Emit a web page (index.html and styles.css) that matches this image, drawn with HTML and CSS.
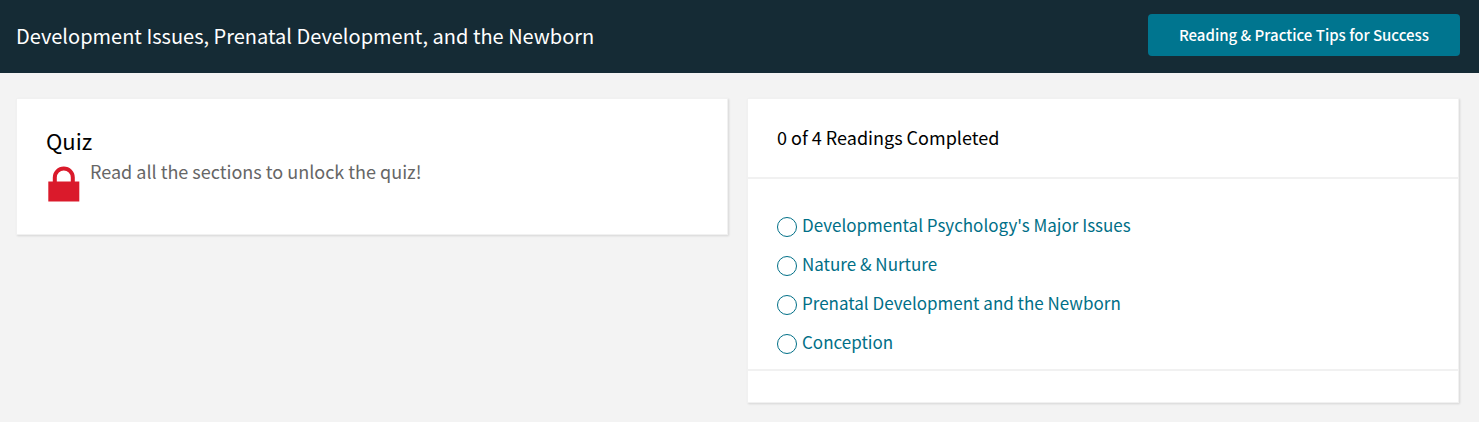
FILE: index.html
```html
<!DOCTYPE html>
<html lang="en">
<head>
<meta charset="utf-8">
<title>Development Issues, Prenatal Development, and the Newborn</title>
<link rel="stylesheet" href="styles.css">
</head>
<body>
<header class="topbar">
  <h1 class="topbar-title">Development Issues, Prenatal Development, and the Newborn</h1>
  <button class="tips-button" type="button">Reading &amp; Practice Tips for Success</button>
</header>
<main class="columns">
  <section class="card quiz">
    <h2 class="quiz-title">Quiz</h2>
    <div class="quiz-status">
      <svg class="lock" viewBox="0 0 34 36" aria-hidden="true"><path class="lock-body" d="M2.300 15.500h31v20h-31z"/><path class="lock-shackle" d="M8.800 16v-4.500a9 9 0 0 1 18 0V16"/></svg>
      <p class="quiz-text">Read all the sections to unlock the quiz!</p>
    </div>
  </section>
  <section class="card readings">
    <h2 class="readings-title">0 of 4 Readings Completed</h2>
    <ul class="reading-list">
      <li class="reading"><span class="circle"></span><a class="reading-link" href="#">Developmental Psychology's Major Issues</a></li>
      <li class="reading"><span class="circle"></span><a class="reading-link" href="#">Nature &amp; Nurture</a></li>
      <li class="reading"><span class="circle"></span><a class="reading-link" href="#">Prenatal Development and the Newborn</a></li>
      <li class="reading"><span class="circle"></span><a class="reading-link" href="#">Conception</a></li>
    </ul>
    <div class="readings-footer"></div>
  </section>
</main>
</body>
</html>
```
FILE: styles.css
```css
* { box-sizing: border-box; }
body {
  margin: 0;
  background: #f3f3f3;
  color: #000;
  font-family: "Noto Sans CJK SC", "Noto Sans", sans-serif;
}
h1, h2, p, ul { margin: 0; padding: 0; font-weight: 400; }
.topbar {
  display: flex;
  align-items: center;
  justify-content: space-between;
  padding: 14px 19px 15px 16px;
  background: #152b35;
  color: #fff;
}
.topbar-title { font-size: 20px; line-height: 44px; }
.tips-button {
  align-self: flex-start;
  height: 42px;
  padding: 0 31px;
  border: 0;
  border-radius: 4px;
  background: #00758f;
  color: #fff;
  font: 500 15px/42px "Noto Sans CJK SC", "Noto Sans", sans-serif;
}
.columns {
  display: grid;
  grid-template-columns: 1fr 1fr;
  align-items: start;
  gap: 19px;
  padding: 25px 20px 19px 16px;
}
.card {
  border: 1px solid #f1f1f1;
  background: #fff;
  box-shadow: 1px 1px 2px rgba(0, 0, 0, 0.12);
}
.quiz { padding: 25px 29px 32px; }
.quiz-title { font-size: 22px; line-height: 32px; }
.quiz-status { display: flex; align-items: flex-start; gap: 10px; }
.lock { width: 34px; height: 36px; margin-top: 10px; }
.lock-body { fill: #da1a2b; }
.lock-shackle { fill: none; stroke: #da1a2b; stroke-width: 4; }
.quiz-text { font-size: 18px; line-height: 30px; color: #666; }
.readings-title {
  padding: 23px 29px 25px;
  border-bottom: 2px solid #f1f1f1;
  font-size: 18px;
  line-height: 30px;
}
.reading-list {
  display: grid;
  gap: 11px;
  padding: 32px 29px 13px;
  list-style: none;
}
.reading { display: flex; align-items: center; gap: 5px; }
.circle {
  width: 20px;
  height: 20px;
  margin-top: 4px;
  border: 1px solid #006f87;
  border-radius: 50%;
}
.reading-link { color: #006f87; font-size: 17px; line-height: 28px; text-decoration: none; }
.readings-footer { height: 33px; border-top: 2px solid #f1f1f1; }
```
